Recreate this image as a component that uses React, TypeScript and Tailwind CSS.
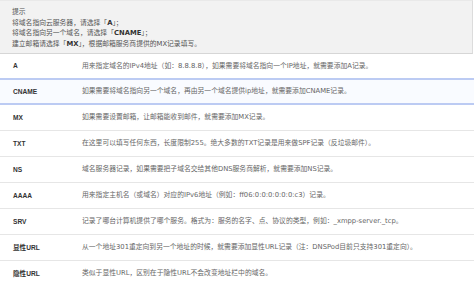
import React from "react";

const rows: { k: string; v: string; hl?: boolean }[] = [
  { k: "A", v: "用来指定域名的IPv4地址（如：8.8.8.8），如果需要将域名指向一个IP地址，就需要添加A记录。" },
  { k: "CNAME", v: "如果需要将域名指向另一个域名，再由另一个域名提供ip地址，就需要添加CNAME记录。", hl: true },
  { k: "MX", v: "如果需要设置邮箱，让邮箱能收到邮件，就需要添加MX记录。" },
  { k: "TXT", v: "在这里可以填写任何东西，长度限制255。绝大多数的TXT记录是用来做SPF记录（反垃圾邮件）。" },
  { k: "NS", v: "域名服务器记录，如果需要把子域名交给其他DNS服务商解析，就需要添加NS记录。" },
  { k: "AAAA", v: "用来指定主机名（或域名）对应的IPv6地址（例如：ff06:0:0:0:0:0:0:c3）记录。" },
  { k: "SRV", v: "记录了哪台计算机提供了哪个服务。格式为：服务的名字、点、协议的类型，例如：_xmpp-server._tcp。" },
  { k: "显性URL", v: "从一个地址301重定向到另一个地址的时候，就需要添加显性URL记录（注：DNSPod目前只支持301重定向）。" },
  { k: "隐性URL", v: "类似于显性URL，区别在于隐性URL不会改变地址栏中的域名。" },
];

const bodyFont = { fontFamily: '"DejaVu Sans", "Noto Sans CJK SC", sans-serif' };

export default function App() {
  return (
    <div
      className="w-[474px] h-[283px] overflow-hidden bg-white text-[6.6px]"
      style={{ fontFamily: '"Liberation Sans", "Noto Sans CJK SC", sans-serif' }}
    >
      <div
        className="w-[473px] h-[54px] bg-[#f2f2f2] border-t border-[#e9e9e9] border-r border-r-[#dcdcdc] border-b border-b-[#d6d6d6] pl-[12px] pt-[6px] text-[#555] text-[6.8px] leading-[10.5px]"
        style={bodyFont}
      >
        <div>提示</div>
        <div>
          将域名指向云服务器，请选择「<b className="text-[#333]">A</b>」；
        </div>
        <div>
          将域名指向另一个域名，请选择「<b className="text-[#333]">CNAME</b>」；
        </div>
        <div>
          建立邮箱请选择「<b className="text-[#333]">MX</b>」，根据邮箱服务商提供的MX记录填写。
        </div>
      </div>
      <div className="flex flex-col">
        {rows.map((r, i) => {
          const nextHl = rows[i + 1]?.hl;
          const borderCls = r.hl || nextHl ? "border-b-2 border-[#bccbf3]" : "border-b border-[#e6e6e6]";
          return (
            <div
              key={r.k}
              className={`flex items-center ${r.hl ? "h-[25px] bg-[#f9fbff]" : "h-[26px]"} ${borderCls}`}
            >
              <div className="w-[82px] shrink-0 pl-[13px] font-bold text-[#333]">{r.k}</div>
              <div className="text-[#666] text-[6.8px] whitespace-nowrap" style={bodyFont}>
                {r.v}
              </div>
            </div>
          );
        })}
      </div>
    </div>
  );
}
